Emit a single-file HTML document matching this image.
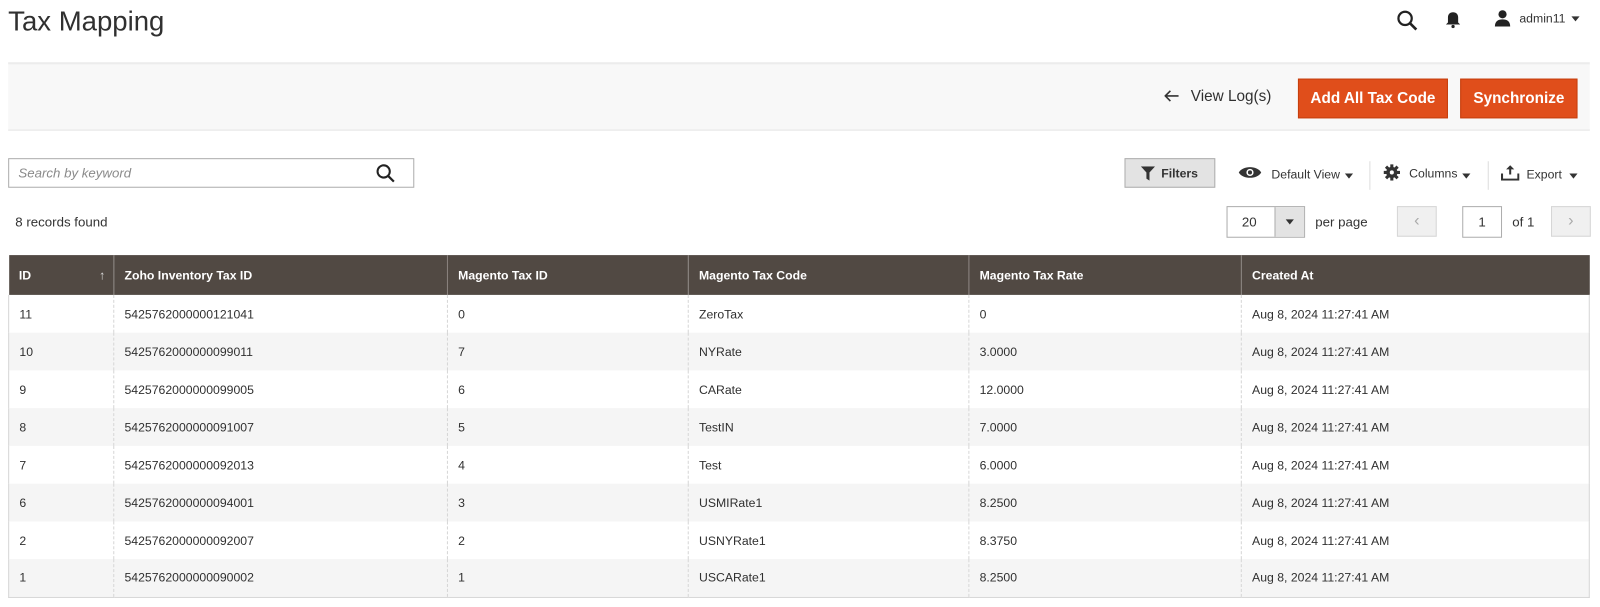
<!DOCTYPE html>
<html><head><meta charset="utf-8"><style>
*{box-sizing:border-box;margin:0;padding:0}
html,body{width:1600px;height:607px;overflow:hidden;background:#fff}
#w{position:absolute;left:0;top:0;width:1568px;height:595px;transform:scale(1.0204);transform-origin:0 0;font-family:"Liberation Sans",sans-serif;color:#333}
.abs{position:absolute}
h1{position:absolute;left:8px;top:6px;font-size:27px;font-weight:400;color:#303030}
.bar{left:8px;top:61px;width:1550px;height:67px;background:#f8f8f8;border-top:2px solid #ececec;border-bottom:1px solid #e3e3e3}
.btn{background:#e04e1b;color:#fff;font-weight:700;font-size:15px;border:1px solid #c63f0d;display:flex;align-items:center;justify-content:center}
table{position:absolute;left:8px;top:250px;width:1550px;border-collapse:collapse;font-size:12px}
th{background:#514943;color:#fff;text-align:left;height:39px;padding-left:10px;font-weight:700;border-left:1px solid #8a837f}
th:first-child{border-left:none}
td{height:37px;padding-left:10px;border-left:1px dashed #d6d6d6;color:#303030}
td:first-child{border-left:1px solid #d6d6d6}
td:last-child{border-right:1px solid #d6d6d6}
tr:nth-child(odd) td{background:#f5f5f5}
tr:last-child td{border-bottom:1px solid #d6d6d6}
.sm{font-size:12px;color:#333}
</style></head><body><div id="w">
<h1>Tax Mapping</h1>
<svg class="abs" style="left:1368px;top:9px" width="22" height="22" viewBox="0 0 22 22"><circle cx="9" cy="9" r="6.5" fill="none" stroke="#222" stroke-width="2.2"/><path d="M14 14l6 6" stroke="#222" stroke-width="2.6"/></svg>
<svg class="abs" style="left:1417px;top:11px" width="14" height="17" viewBox="0 0 14 17"><path d="M7 1c3 0 5 2 5 5v5l2 2H0l2-2V6c0-3 2-5 5-5z" fill="#222"/><circle cx="7" cy="15" r="1.6" fill="#222"/></svg>
<svg class="abs" style="left:1464px;top:9px" width="17" height="17" viewBox="0 0 17 17"><circle cx="8.5" cy="5" r="4" fill="#222"/><path d="M1 17c0-5 3-7 7.5-7s7.5 2 7.5 7z" fill="#222"/></svg>
<div class="abs sm" style="left:1489px;top:11px;font-size:12px">admin11</div>
<div class="abs" style="left:1540px;top:16px;border:4px solid transparent;border-top:5px solid #333"></div>
<div class="abs bar"></div>
<svg class="abs" style="left:1141px;top:88px" width="15" height="12" viewBox="0 0 15 12"><path d="M14 6H2M6 1L1 6l5 5" fill="none" stroke="#333" stroke-width="1.6"/></svg>
<div class="abs" style="left:1167px;top:86px;font-size:15px;color:#303030">View Log(s)</div>
<div class="abs btn" style="left:1272px;top:77px;width:147px;height:39px">Add All Tax Code</div>
<div class="abs btn" style="left:1431px;top:77px;width:115px;height:39px">Synchronize</div>
<div class="abs" style="left:8px;top:155px;width:398px;height:29px;border:1px solid #adadad"></div>
<div class="abs" style="left:18px;top:162px;font-size:13px;font-style:italic;color:#8a8a8a">Search by keyword</div>
<svg class="abs" style="left:368px;top:160px" width="20" height="20" viewBox="0 0 20 20"><circle cx="8" cy="8" r="6" fill="none" stroke="#222" stroke-width="2"/><path d="M12.5 12.5l5.5 5.5" stroke="#222" stroke-width="2.2"/></svg>
<div class="abs" style="left:1102px;top:155px;width:89px;height:29px;background:#e3e3e3;border:1px solid #adadad"></div>
<svg class="abs" style="left:1118px;top:163px" width="14" height="14" viewBox="0 0 14 14"><path d="M0 0h14L8.5 6v8L5.5 12V6z" fill="#333"/></svg>
<div class="abs sm" style="left:1138px;top:163px;font-weight:700">Filters</div>
<svg class="abs" style="left:1213px;top:162px" width="24" height="14" viewBox="0 0 24 14"><path d="M1 7C5 0 19 0 23 7 19 14 5 14 1 7z" fill="#333"/><circle cx="12" cy="7" r="3.5" fill="#fff"/><circle cx="12" cy="7" r="2" fill="#333"/></svg>
<div class="abs sm" style="left:1246px;top:164px">Default View</div>
<div class="abs" style="left:1318px;top:170px;border:4px solid transparent;border-top:5px solid #333"></div>
<div class="abs" style="left:1342px;top:158px;width:1px;height:28px;background:#ddd"></div>
<svg class="abs" style="left:1356px;top:161px" width="16" height="16" viewBox="0 0 16 16"><circle cx="8" cy="8" r="5.5" fill="#333"/><g stroke="#333" stroke-width="3"><path d="M8 0v16M0 8h16M2.3 2.3l11.4 11.4M13.7 2.3L2.3 13.7"/></g><circle cx="8" cy="8" r="2" fill="#fff"/></svg>
<div class="abs sm" style="left:1381px;top:163px">Columns</div>
<div class="abs" style="left:1433px;top:170px;border:4px solid transparent;border-top:5px solid #333"></div>
<div class="abs" style="left:1458px;top:158px;width:1px;height:28px;background:#ddd"></div>
<svg class="abs" style="left:1471px;top:161px" width="18" height="16" viewBox="0 0 18 16"><path d="M9 1l4 4h-3v5H8V5H5z" fill="#333"/><path d="M1 9v6h16V9" fill="none" stroke="#333" stroke-width="2"/></svg>
<div class="abs sm" style="left:1496px;top:164px">Export</div>
<div class="abs" style="left:1538px;top:170px;border:4px solid transparent;border-top:5px solid #333"></div>
<div class="abs" style="left:15px;top:210px;font-size:13px;color:#333">8 records found</div>
<div class="abs" style="left:1202px;top:202px;width:77px;height:31px;border:1px solid #adadad"></div>
<div class="abs" style="left:1249px;top:203px;width:29px;height:29px;background:#e3e3e3;border-left:1px solid #adadad"></div>
<div class="abs" style="left:1260px;top:215px;border:4px solid transparent;border-top:5px solid #333"></div>
<div class="abs" style="left:1217px;top:210px;font-size:13px">20</div>
<div class="abs" style="left:1289px;top:210px;font-size:13px">per page</div>
<div class="abs" style="left:1369px;top:202px;width:39px;height:30px;background:#f0f0f0;border:1px solid #d6d6d6;color:#aaa;text-align:center;line-height:28px">‹</div>
<div class="abs" style="left:1433px;top:202px;width:39px;height:31px;border:1px solid #adadad;text-align:center;line-height:29px;font-size:13px">1</div>
<div class="abs" style="left:1482px;top:210px;font-size:13px">of 1</div>
<div class="abs" style="left:1520px;top:202px;width:39px;height:30px;background:#f0f0f0;border:1px solid #d6d6d6;color:#aaa;text-align:center;line-height:28px">›</div>
<table>
<tr><th style="width:103px">ID<span style="float:right;margin-right:8px;color:#ddd;font-weight:400">↑</span></th><th style="width:327px">Zoho Inventory Tax ID</th><th style="width:236px">Magento Tax ID</th><th style="width:275px">Magento Tax Code</th><th style="width:267px">Magento Tax Rate</th><th>Created At</th></tr>
<tr><td>11</td><td>5425762000000121041</td><td>0</td><td>ZeroTax</td><td>0</td><td>Aug 8, 2024 11:27:41 AM</td></tr>
<tr><td>10</td><td>5425762000000099011</td><td>7</td><td>NYRate</td><td>3.0000</td><td>Aug 8, 2024 11:27:41 AM</td></tr>
<tr><td>9</td><td>5425762000000099005</td><td>6</td><td>CARate</td><td>12.0000</td><td>Aug 8, 2024 11:27:41 AM</td></tr>
<tr><td>8</td><td>5425762000000091007</td><td>5</td><td>TestIN</td><td>7.0000</td><td>Aug 8, 2024 11:27:41 AM</td></tr>
<tr><td>7</td><td>5425762000000092013</td><td>4</td><td>Test</td><td>6.0000</td><td>Aug 8, 2024 11:27:41 AM</td></tr>
<tr><td>6</td><td>5425762000000094001</td><td>3</td><td>USMIRate1</td><td>8.2500</td><td>Aug 8, 2024 11:27:41 AM</td></tr>
<tr><td>2</td><td>5425762000000092007</td><td>2</td><td>USNYRate1</td><td>8.3750</td><td>Aug 8, 2024 11:27:41 AM</td></tr>
<tr><td>1</td><td>5425762000000090002</td><td>1</td><td>USCARate1</td><td>8.2500</td><td>Aug 8, 2024 11:27:41 AM</td></tr>
</table>
</div></body></html>
